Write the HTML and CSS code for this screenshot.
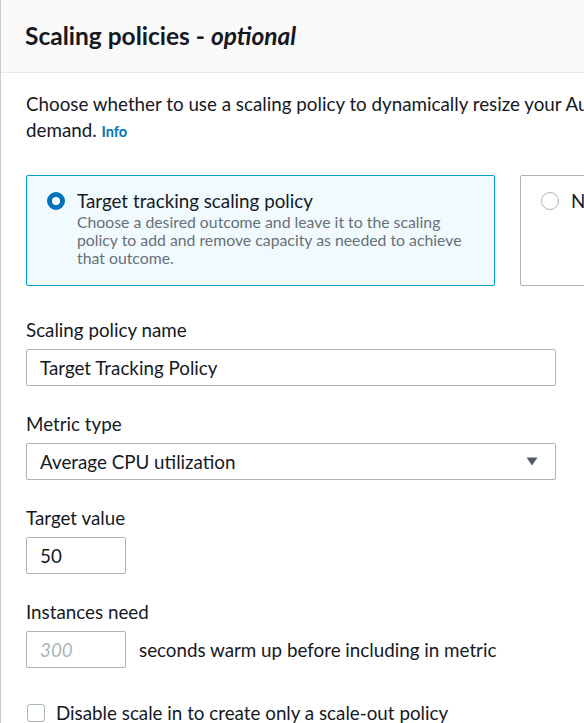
FILE: index.html
```html
<!DOCTYPE html>
<html>
<head>
<meta charset="utf-8">
<link rel="stylesheet" href="styles.css">
</head>
<body>
<div class="panel">
  <div class="panel-header">
    <h2 class="panel-title">Scaling policies - <em>optional</em></h2>
  </div>
  <div class="panel-body">
    <p class="intro">Choose whether to use a scaling policy to dynamically resize your Auto Scaling group to meet changes in<br>demand. <a class="info" href="#">Info</a></p>

    <div class="tiles">
      <div class="tile selected">
        <span class="radio checked"></span>
        <div class="tile-text">
          <div class="tile-title">Target tracking scaling policy</div>
          <div class="tile-desc">Choose a desired outcome and leave it to the scaling policy to add and remove capacity as needed to achieve that outcome.</div>
        </div>
      </div>
      <div class="tile">
        <span class="radio"></span>
        <div class="tile-text">
          <div class="tile-title">None</div>
        </div>
      </div>
    </div>

    <div class="field">
      <label class="label">Scaling policy name</label>
      <div class="input wide">Target Tracking Policy</div>
    </div>

    <div class="field">
      <label class="label">Metric type</label>
      <div class="input wide select">
        <span>Average CPU utilization</span>
        <svg class="caret" width="12" height="9" viewBox="0 0 12 9"><path d="M0.5 0.5h11L6 8.5z" fill="#545b64"/></svg>
      </div>
    </div>

    <div class="field">
      <label class="label">Target value</label>
      <div class="input small">50</div>
    </div>

    <div class="field">
      <label class="label">Instances need</label>
      <div class="inline-row">
        <div class="input small placeholder">300</div>
        <span class="inline-text">seconds warm up before including in metric</span>
      </div>
    </div>

    <div class="check-row">
      <span class="checkbox"></span>
      <span class="check-label">Disable scale in to create only a scale-out policy</span>
    </div>
  </div>
</div>
</body>
</html>
```
FILE: styles.css
```css
html, body {
  margin: 0;
  padding: 0;
  background: #ffffff;
}
body {
  font-family: "Lato", "Noto Sans", sans-serif;
  color: #16191f;
  width: 584px;
  height: 723px;
  overflow: hidden;
}
.panel {
  border-left: 1px solid #c6cccc;
  min-height: 723px;
  box-sizing: border-box;
}
.panel-header {
  height: 72px;
  background: #fafafa;
  border-bottom: 1px solid #e6eaea;
  display: flex;
  align-items: center;
  padding-left: 24px;
}
.panel-title {
  margin: 0;
  font-size: 24.5px;
  font-weight: 700;
  line-height: 28px;
  white-space: nowrap;
}
.panel-title em {
  font-style: italic;
}
.panel-body {
  padding: 18px 0 0 25px;
}
.intro {
  margin: 0;
  font-size: 18.8px;
  line-height: 26px;
  white-space: nowrap;
}
.info {
  color: #0073bb;
  font-weight: 700;
  font-size: 14.5px;
  text-decoration: none;
  margin-left: 0;
}
.tiles {
  display: flex;
  gap: 25px;
  margin-top: 30px;
  width: 1000px;
}
.tile {
  width: 469px;
  height: 111px;
  box-sizing: border-box;
  border: 1px solid #aab7b8;
  border-radius: 2px;
  padding: 14px 20px 0 20px;
  display: flex;
  gap: 12px;
  flex-shrink: 0;
}
.tile.selected {
  border-color: #00a1c9;
  background: #f1faff;
}
.radio {
  width: 18px;
  height: 18px;
  box-sizing: border-box;
  border: 1px solid #aab7b8;
  border-radius: 50%;
  background: #fff;
  margin-top: 2px;
  flex-shrink: 0;
}
.radio.checked {
  border: 5.5px solid #0073bb;
}
.tile-text {
  flex: 1;
  min-width: 0;
}
.tile-title {
  font-size: 18.8px;
  line-height: 22px;
  white-space: nowrap;
}
.tile-desc {
  font-size: 15.8px;
  line-height: 18px;
  color: #687078;
  margin-top: 1px;
}
.field {
  margin-top: 33px;
}
.field + .field {
  margin-top: 27px;
}
.label {
  display: block;
  font-size: 18.8px;
  line-height: 22px;
  margin-bottom: 8px;
}
.input {
  height: 37px;
  box-sizing: border-box;
  border: 1px solid #aab7b8;
  border-radius: 2px;
  background: #fff;
  font-size: 18.8px;
  line-height: 35px;
  padding: 0 13px;
}
.input.wide {
  width: 530px;
}
.input.small {
  width: 100px;
}
.select {
  display: flex;
  justify-content: space-between;
  align-items: center;
  padding-right: 17px;
}
.caret {
  display: block;
}
.placeholder {
  color: #aab7b8;
  font-style: italic;
}
.inline-row {
  display: flex;
  align-items: center;
  gap: 13px;
}
.inline-text {
  font-size: 18.8px;
  line-height: 22px;
  white-space: nowrap;
}
.check-row {
  display: flex;
  align-items: center;
  gap: 11px;
  margin-top: 34px;
  margin-left: 1px;
}
.checkbox {
  width: 18px;
  height: 18px;
  box-sizing: border-box;
  border: 1px solid #aab7b8;
  border-radius: 3px;
  background: #fff;
  flex-shrink: 0;
}
.check-label {
  font-size: 18.8px;
  line-height: 22px;
  white-space: nowrap;
}
```
